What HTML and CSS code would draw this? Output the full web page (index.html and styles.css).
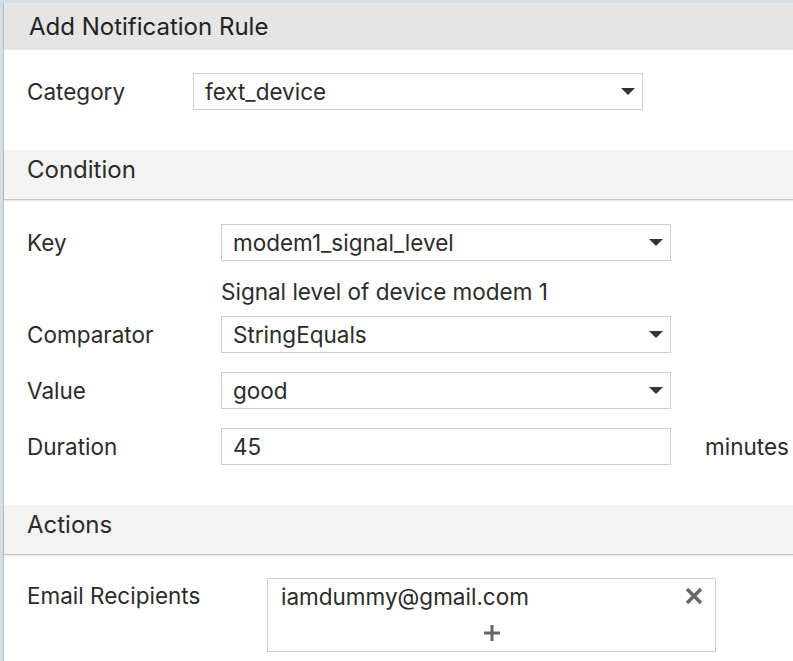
FILE: index.html
```html
<!DOCTYPE html>
<html lang="en">
<head>
<meta charset="utf-8">
<title>Add Notification Rule</title>
<link rel="stylesheet" href="styles.css">
</head>
<body>
<div class="dialog">
  <div class="dialog-title">Add Notification Rule</div>

  <div class="section section-category">
    <div class="row">
      <div class="label">Category</div>
      <div class="select"><span class="value">fext_device</span><span class="caret"></span></div>
    </div>
  </div>

  <div class="section-header">Condition</div>
  <div class="section section-condition">
    <div class="row">
      <div class="label">Key</div>
      <div class="select"><span class="value">modem1_signal_level</span><span class="caret"></span></div>
    </div>
    <div class="row row-help">
      <div class="label"></div>
      <div class="help">Signal level of device modem 1</div>
    </div>
    <div class="row">
      <div class="label">Comparator</div>
      <div class="select"><span class="value">StringEquals</span><span class="caret"></span></div>
    </div>
    <div class="row">
      <div class="label">Value</div>
      <div class="select"><span class="value">good</span><span class="caret"></span></div>
    </div>
    <div class="row">
      <div class="label">Duration</div>
      <div class="input"><span class="value">45</span></div>
      <div class="unit">minutes</div>
    </div>
  </div>

  <div class="section-header">Actions</div>
  <div class="section section-actions">
    <div class="row row-top">
      <div class="label">Email Recipients</div>
      <div class="recipients">
        <div class="recipient">
          <span class="email">iamdummy@gmail.com</span>
          <svg class="remove" width="18" height="18" viewBox="0 0 18 18" aria-hidden="true">
            <path d="M2 2 L16 16 M16 2 L2 16" stroke="#666" stroke-width="3.4" stroke-linecap="butt" fill="none"/>
          </svg>
        </div>
        <div class="add">
          <svg width="18" height="18" viewBox="0 0 18 18" aria-hidden="true">
            <path d="M9 1 V17 M1 9 H17" stroke="#666" stroke-width="3" fill="none"/>
          </svg>
        </div>
      </div>
    </div>
  </div>
</div>
</body>
</html>
```

FILE: styles.css
```css
html, body {
  margin: 0;
  padding: 0;
  height: 100%;
  overflow: hidden;
}

body {
  background: #d3dee8;
  font-family: Inter, "Liberation Sans", sans-serif;
  color: #2b2b2b;
  font-size: 22.5px;
}

.dialog {
  margin: 3px 0 0 3px;
  width: 830px;
  min-height: 700px;
  background: #ffffff;
  border-left: 1px solid #bdbdbd;
}

.dialog-title {
  height: 47px;
  line-height: 47px;
  padding-left: 25px;
  background: #e5e5e5;
  font-size: 24px;
  color: #222;
}

.section {
  padding: 0 0 0 23px;
}

.section-category {
  padding-top: 23px;
  padding-bottom: 40px;
}

.section-condition {
  padding-top: 24px;
  padding-bottom: 40px;
  display: flex;
  flex-direction: column;
  gap: 19px;
}

.section-actions {
  padding-top: 23px;
  padding-bottom: 20px;
}

.section-header {
  height: 49px;
  line-height: 40px;
  padding-left: 23px;
  background: #f3f3f3;
  border-bottom: 1px solid #c6c6c6;
  box-shadow: 0 1px 2px rgba(0, 0, 0, 0.12);
  font-size: 24px;
  color: #2b2b2b;
}

.row {
  display: flex;
  align-items: center;
}

.row-top {
  align-items: flex-start;
}

.label {
  flex: none;
}

.section-category .label { width: 166px; }
.section-condition .label { width: 194px; }
.section-actions .label { width: 240px; padding-top: 4px; }

.select,
.input {
  box-sizing: border-box;
  width: 450px;
  height: 37px;
  border: 1px solid #cdcdcd;
  background: #fff;
  display: flex;
  align-items: center;
  justify-content: space-between;
  padding: 0 7px 0 11px;
}

.caret {
  width: 0;
  height: 0;
  border-left: 7px solid transparent;
  border-right: 7px solid transparent;
  border-top: 7px solid #333;
}

.row-help {
  margin-bottom: -7px;
}

.help {
  line-height: 24px;
}

.unit {
  margin-left: 34px;
}

.recipients {
  box-sizing: border-box;
  width: 449px;
  height: 74px;
  border: 1px solid #cdcdcd;
  padding: 2px 12px 0 13px;
}

.recipient {
  display: flex;
  align-items: center;
  justify-content: space-between;
  height: 30px;
}

.add {
  display: flex;
  justify-content: center;
  align-items: center;
  height: 28px;
  margin-top: 8px;
}
```
